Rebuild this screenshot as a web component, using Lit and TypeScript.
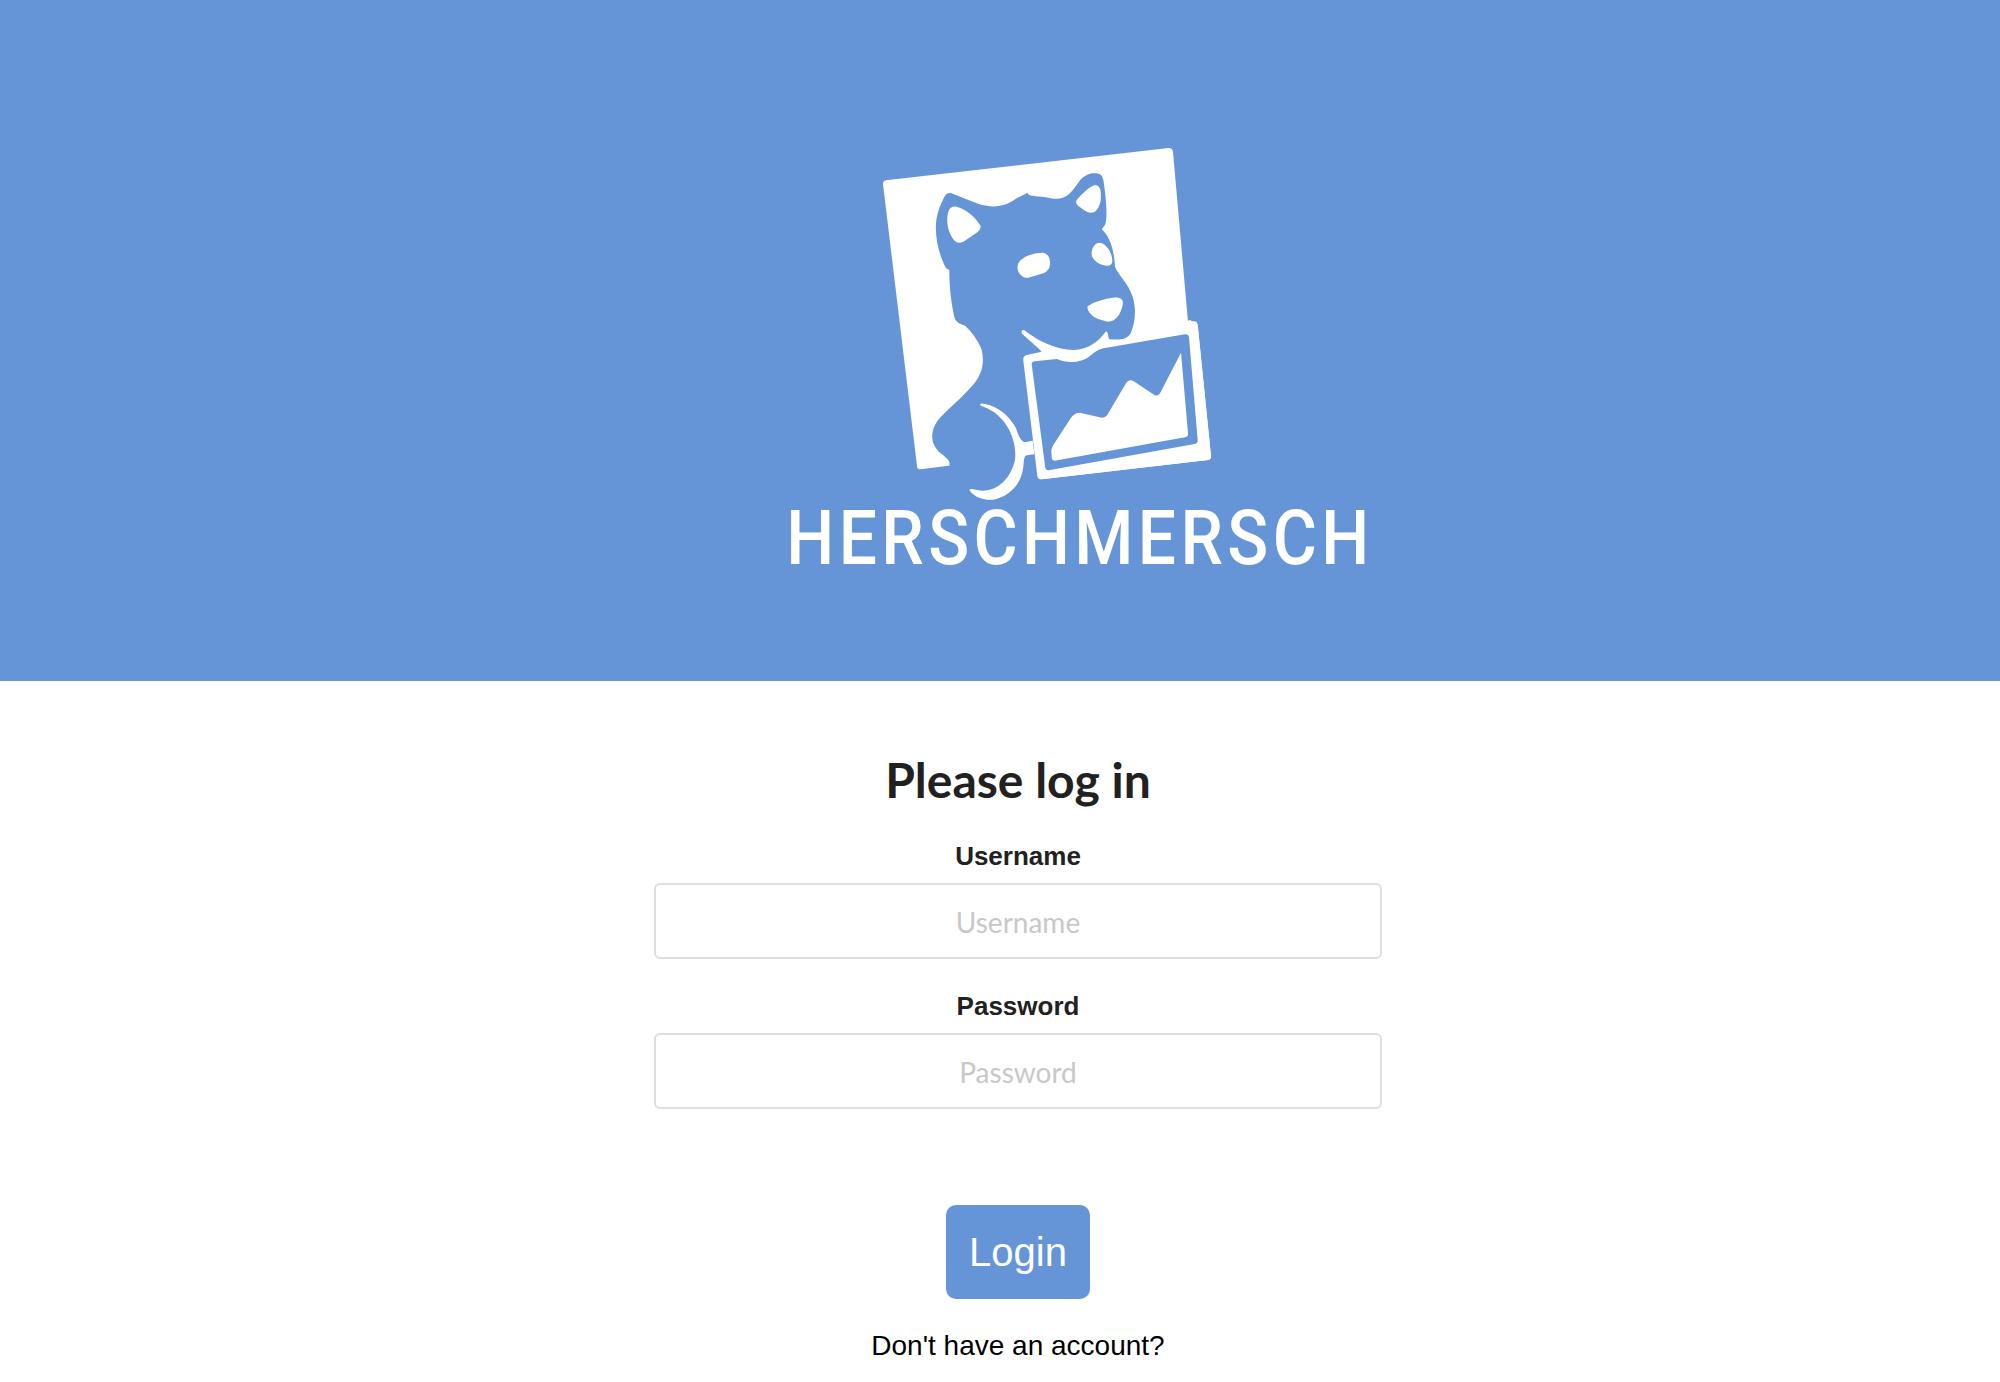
import { LitElement, html, css, svg } from "lit";
import { customElement } from "lit/decorators.js";

const logo = svg`
  <path fill="#fff" d="M378 181 L1226 84 Q1238 84 1239 96 L1284 606 L1300 604 Q1312 603 1313 614 L1353 1008 Q1354 1018 1344 1020 L845 1078 Q834 1079 832 1068 L825 1010 L565 1037 L482 1048 Q472 1049 471 1038 L369 192 Q369 183 378 181 Z"/>
  <path fill="#6595d7" d="M556 226 Q564 215 580 222 L650 250 C700 268 740 258 770 235 L803 218 C805 232 840 226 880 236 C920 240 935 215 955 188 C970 165 990 158 1010 160 C1028 162 1030 175 1033 200 C1040 250 1042 300 1035 315 L1025 328 C1045 345 1062 380 1065 440 C1075 465 1105 490 1118 530 C1130 570 1125 610 1112 640 C1100 660 1080 660 1048 658 L1042 690 L1000 740 L840 1090 L600 1090 L568 1034 C572 1020 555 1010 540 998 C515 975 510 945 525 915 C540 885 590 850 630 805 C665 770 675 730 665 690 C655 660 630 630 615 617 C600 612 585 605 583 590 C575 555 568 510 568 450 L558 445 C540 410 525 360 528 310 C530 280 545 245 556 226 Z"/>
  <path fill="#fff" d="M785 632 C790 628 795 632 800 636 C840 665 890 690 940 690 C985 690 1020 660 1036 636 C1042 630 1044 640 1045 650 C1046 658 1050 660 1060 660 L1110 660 L1290 600 L1313 614 L1353 1008 Q1354 1018 1344 1020 L845 1078 Q834 1079 832 1068 L790 722 Q788 708 800 705 L845 695 C825 675 800 655 785 640 Z"/>
  <path fill="#6595d7" d="M815 733 Q815 725 825 724 L890 717 C920 730 960 730 985 712 C1000 700 1010 690 1030 685 L1275 643 Q1286 642 1287 652 L1313 960 Q1314 970 1304 972 L866 1051 Q858 1052 856 1044 Z"/>
  <path fill="#fff" d="M1263 698 L1284 940 Q1285 950 1275 952 L884 1022 Q876 1022 875 1012 L874 990 Q875 982 880 975 L932 895 Q942 878 960 878 L1025 893 Q1036 893 1042 884 L1098 790 Q1106 776 1120 783 L1182 824 Q1194 832 1202 816 Z"/>
  <path fill="#fff" d="M660 853 Q662 850 672 851 C715 858 750 890 768 925 C775 945 782 965 795 967 L818 962 L823 1003 L800 1006 C792 1008 792 1020 790 1040 C785 1090 750 1130 700 1139 C670 1142 640 1130 628 1110 Q630 1105 640 1108 C700 1125 750 1085 765 1020 C772 960 740 885 670 860 Q660 858 660 853 Z"/>
  <path fill="#fff" d="M565 275 Q570 258 590 260 C620 268 650 295 662 318 Q662 330 650 338 L610 365 Q590 375 578 355 C562 330 558 300 565 275 Z"/>
  <path fill="#fff" d="M950 240 C965 222 990 198 1005 195 Q1020 195 1022 215 C1025 240 1020 262 1005 275 Q990 282 975 272 L955 258 Q945 250 950 240 Z"/>
  <path fill="#fff" d="M775 430 C785 410 820 398 850 398 Q870 402 870 430 Q870 452 850 460 L805 473 Q785 475 775 455 Q770 442 775 430 Z"/>
  <path fill="#fff" d="M995 395 Q1000 368 1020 368 C1040 372 1058 400 1057 425 Q1055 438 1040 437 C1015 435 992 418 995 395 Z"/>
  <path fill="#fff" d="M982 560 C995 548 1050 530 1075 533 Q1092 535 1088 555 C1082 585 1065 605 1045 605 C1020 600 985 590 982 560 Z"/>
`;

@customElement("app-root")
export class AppRoot extends LitElement {
  static styles = css`
    :host { display: block; background: #fff; min-height: 1382px; overflow: hidden; }
    .hero {
      height: 681px;
      background: #6595d7;
      display: flex;
      flex-direction: column;
      align-items: center;
      padding: 120px 0 0 154px;
      box-sizing: border-box;
    }
    .mark { width: 480px; height: 400px; display: block; flex: none; margin-left: -154px; }
    .word {
      margin: -20px 0 0 5px;
      font: 500 76px/1 Roboto, "Liberation Sans", sans-serif;
      letter-spacing: 4.9px;
      color: #fff;
      white-space: nowrap;
      transform: scaleX(0.89);
    }
    form { display: flex; flex-direction: column; align-items: center; padding-left: 36px; }
    h1 {
      margin: 70px 0 0;
      font: 700 48px/58px Lato, "Liberation Sans", sans-serif;
      color: #212121;
    }
    label {
      margin-top: 30px;
      font: 700 26px/34px "Liberation Sans", Arial, sans-serif;
      color: #212121;
    }
    .pw { margin-top: 30px; }
    input {
      margin-top: 10px;
      width: 728px;
      height: 76px;
      box-sizing: border-box;
      border: 2px solid #dedede;
      border-radius: 6px;
      background: #fff;
      text-align: center;
      font: 400 28px Lato, "Liberation Sans", sans-serif;
      color: #212121;
      padding: 2px 0 0;
      outline: none;
    }
    input::placeholder { color: #c8c8c8; opacity: 1; }
    button {
      margin-top: 96px;
      width: 144px;
      height: 94px;
      border: 0;
      border-radius: 10px;
      background: #6595d7;
      color: #fff;
      font: 400 40px "Liberation Sans", Arial, sans-serif;
      padding: 0;
    }
    p {
      margin: 29px 0 0;
      font: 400 28px/36px "Liberation Sans", Arial, sans-serif;
      color: #000;
    }
  `;

  render() {
    return html`
      <div class="hero">
        <svg class="mark" viewBox="0 0 1440 1200" aria-label="Herschmersch logo">${logo}</svg>
        <div class="word">HERSCHMERSCH</div>
      </div>
      <form @submit=${(e: Event) => e.preventDefault()}>
        <h1>Please log in</h1>
        <label for="u">Username</label>
        <input id="u" type="text" placeholder="Username" />
        <label class="pw" for="p">Password</label>
        <input id="p" type="password" placeholder="Password" />
        <button type="submit">Login</button>
        <p>Don't have an account?</p>
      </form>
    `;
  }
}
